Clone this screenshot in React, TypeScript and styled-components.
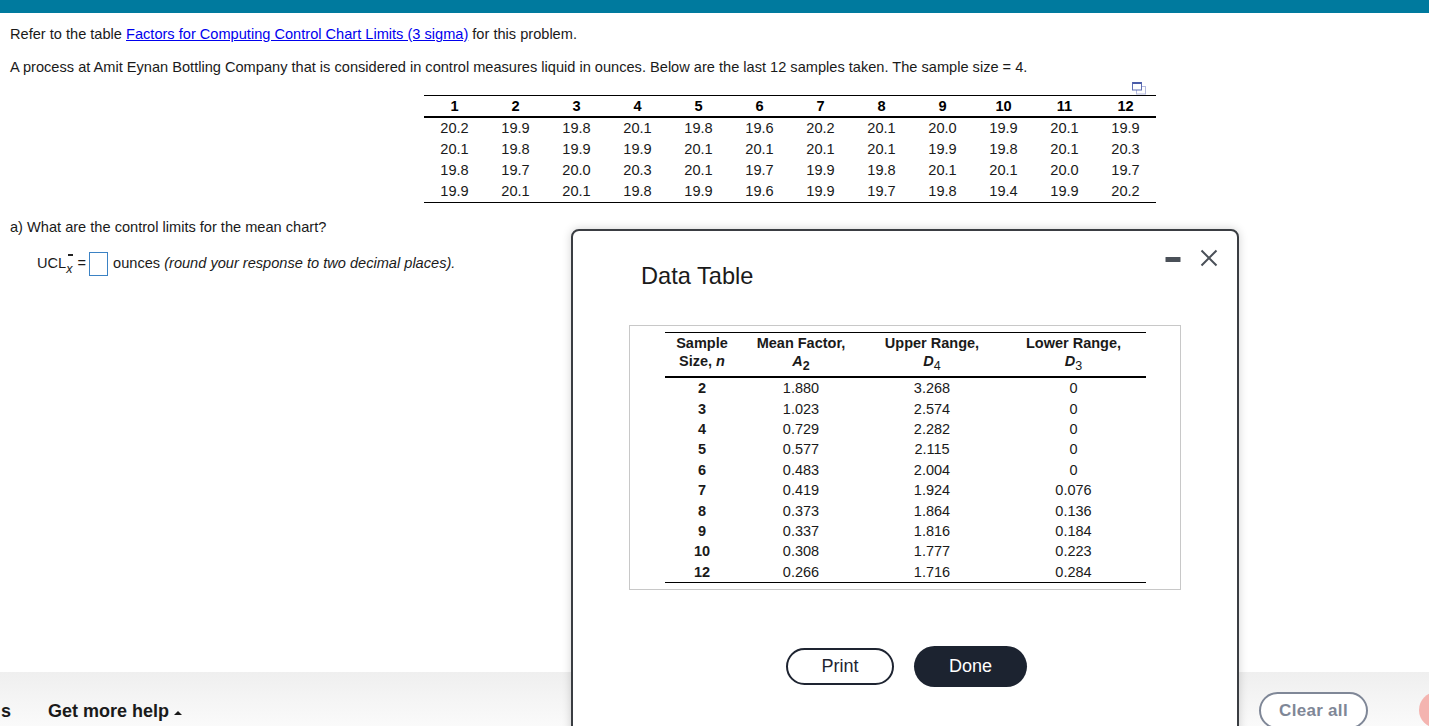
import React from "react";
import styled, { createGlobalStyle } from "styled-components";

const Global = createGlobalStyle`
  html, body { margin: 0; padding: 0; background: #fff; }
  body { font-family: "Liberation Sans", Arial, sans-serif; color: #1a1a1a; overflow: hidden; }
`;

const Page = styled.div`
  position: relative;
  width: 1429px;
  height: 726px;
  overflow: hidden;
  display: flex;
  flex-direction: column;
`;
const TopBar = styled.div`
  height: 13px;
  flex: none;
  background: #007a9e;
`;
const Content = styled.main`
  flex: 1;
  min-height: 0;
  padding: 13px 0 0 10px;
  font-size: 14.6px;
  line-height: 17px;
`;
const Para = styled.p`
  margin: 0 0 16px;
`;
const ProblemPara = styled(Para)`
  margin-bottom: 7px;
`;
const TableLink = styled.a`
  color: #0000ee;
  text-decoration: underline;
`;
const DataWrap = styled.div`
  width: 732px;
  margin: 0 0 0 414px;
`;
const IconRow = styled.div`
  height: 13px;
  display: flex;
  justify-content: flex-end;
  align-items: flex-end;
  padding-right: 10px;
  margin-top: -1px;
`;
const SampleTable = styled.table`
  width: 100%;
  border-collapse: collapse;
  table-layout: fixed;
  border-top: 1px solid #000;
  border-bottom: 1px solid #000;
  font-size: 14.6px;
  margin-top: 0;
`;
const SampleHead = styled.th`
  height: 20px;
  padding: 0;
  font-weight: bold;
  border-bottom: 2px solid #000;
  color: #000;
`;
const SampleCell = styled.td`
  height: 21px;
  padding: 0;
  text-align: center;
`;
const Question = styled.p`
  margin: 16px 0 0;
`;
const AnswerRow = styled.div`
  margin: 15px 0 0 27px;
  display: flex;
  align-items: center;
  height: 25px;
`;
const Ucl = styled.span`
  display: inline-block;
`;
const XSub = styled.sub`
  font-size: 12.5px;
  font-style: italic;
  line-height: 0;
  vertical-align: -5px;
  position: relative;
  margin-right: 1px;
  &::before {
    content: "";
    position: absolute;
    left: 2px;
    top: -8px;
    width: 5px;
    height: 1.5px;
    background: #222;
  }
`;
const AnswerBox = styled.span`
  display: inline-block;
  width: 17px;
  height: 22px;
  margin: 0 5px 0 3px;
  border: 1px solid #3b82c4;
`;
const Footer = styled.footer`
  flex: none;
  height: 54px;
  box-sizing: border-box;
  padding-top: 27px;
  background: linear-gradient(#efefef, #fafafa);
  display: flex;
  align-items: flex-start;
  position: relative;
`;
const CutWord = styled.span`
  font-size: 18px;
  font-weight: bold;
  line-height: 24px;
  width: 47px;
  margin-left: 1px;
  flex: none;
`;
const HelpLink = styled.span`
  font-size: 18px;
  font-weight: bold;
  color: #1a1a1a;
  line-height: 24px;
  display: flex;
  align-items: center;
  gap: 5px;
`;
const Caret = styled.span`
  width: 0;
  height: 0;
  margin-top: 3px;
  border-left: 4px solid transparent;
  border-right: 4px solid transparent;
  border-bottom: 4px solid #1a1a1a;
`;
const ClearAll = styled.button`
  position: absolute;
  left: 1259px;
  top: 20px;
  width: 109px;
  height: 37px;
  border: 2px solid #7f8797;
  border-radius: 19px;
  background: #fff;
  color: #7f8797;
  font: bold 17px "Liberation Sans", Arial, sans-serif;
  letter-spacing: 0.3px;
  padding: 0;
`;
const PinkDot = styled.span`
  position: absolute;
  left: 1419px;
  top: 20px;
  width: 36px;
  height: 36px;
  border-radius: 50%;
  background: #f4b4b0;
`;
const Modal = styled.section`
  position: absolute;
  left: 571px;
  top: 229px;
  width: 608px;
  height: 510px;
  background: #fff;
  border: 2px solid #3a3d42;
  border-radius: 8px;
  box-shadow: 0 0 10px rgba(0, 0, 0, 0.18);
  display: flex;
  flex-direction: column;
  padding: 0 0 0 56px;
  box-sizing: content-box;
`;
const ModalHead = styled.div`
  height: 94px;
  display: flex;
  justify-content: space-between;
  box-sizing: border-box;
`;
const ModalTitle = styled.h2`
  margin: 30px 0 0 12px;
  font-size: 23.6px;
  line-height: 30px;
  font-weight: normal;
  color: #1a1a1a;
`;
const WindowIcons = styled.div`
  display: flex;
  gap: 19px;
  margin: 15px 19px 0 0;
  align-items: flex-start;
`;
const FrameBox = styled.div`
  width: 552px;
  height: 265px;
  box-sizing: border-box;
  border: 1px solid #c8c8c8;
  padding: 6px 34px 0 35px;
`;
const FactorTable = styled.table`
  width: 100%;
  border-collapse: collapse;
  table-layout: fixed;
  font-size: 14.5px;
  color: #1a1a1a;
  border-top: 1px solid #000;
  border-bottom: 1px solid #000;
`;
const FactorHead = styled.th<{ $w: number }>`
  height: 42px;
  padding: 1px 0 0;
  font-weight: bold;
  line-height: 18px;
  border-bottom: 2px solid #000;
  vertical-align: top;
  width: ${(p) => p.$w}px;
`;
const SymbolLine = styled.span`
  font-style: italic;
`;
const Sub = styled.sub`
  font-size: 12.5px;
  font-style: normal;
  font-weight: bold;
  line-height: 0;
  vertical-align: -4px;
`;
const ThinSub = styled(Sub)`
  font-weight: normal;
`;
const FactorCell = styled.td<{ $bold?: boolean }>`
  height: 20.4px;
  padding: 0;
  text-align: center;
  font-weight: ${(p) => (p.$bold ? "bold" : "normal")};
`;
const ButtonRow = styled.div`
  width: 552px;
  display: flex;
  justify-content: center;
  align-items: center;
  gap: 20px;
  margin-top: 56px;
  padding-left: 3px;
  box-sizing: border-box;
`;
const PrintBtn = styled.button`
  width: 108px;
  height: 37px;
  background: #fff;
  color: #1e2431;
  border: 2px solid #1e2431;
  border-radius: 19px;
  font: 18px "Liberation Sans", Arial, sans-serif;
  padding: 0;
`;
const DoneBtn = styled.button`
  width: 113px;
  height: 41px;
  background: #1c2330;
  color: #fff;
  border: none;
  border-radius: 21px;
  font: 18px "Liberation Sans", Arial, sans-serif;
  padding: 0;
`;

const samples = [
  [1, "20.2", "20.1", "19.8", "19.9"],
  [2, "19.9", "19.8", "19.7", "20.1"],
  [3, "19.8", "19.9", "20.0", "20.1"],
  [4, "20.1", "19.9", "20.3", "19.8"],
  [5, "19.8", "20.1", "20.1", "19.9"],
  [6, "19.6", "20.1", "19.7", "19.6"],
  [7, "20.2", "20.1", "19.9", "19.9"],
  [8, "20.1", "20.1", "19.8", "19.7"],
  [9, "20.0", "19.9", "20.1", "19.8"],
  [10, "19.9", "19.8", "20.1", "19.4"],
  [11, "20.1", "20.1", "20.0", "19.9"],
  [12, "19.9", "20.3", "19.7", "20.2"],
];
const factors = [
  ["2", "1.880", "3.268", "0"],
  ["3", "1.023", "2.574", "0"],
  ["4", "0.729", "2.282", "0"],
  ["5", "0.577", "2.115", "0"],
  ["6", "0.483", "2.004", "0"],
  ["7", "0.419", "1.924", "0.076"],
  ["8", "0.373", "1.864", "0.136"],
  ["9", "0.337", "1.816", "0.184"],
  ["10", "0.308", "1.777", "0.223"],
  ["12", "0.266", "1.716", "0.284"],
];

const CopyIcon = () => (
  <svg width="14" height="13" viewBox="0 0 14 13">
    <rect x="4.5" y="4.5" width="9" height="7.5" fill="#fff" stroke="#b4bade" />
    <rect x="0.5" y="0.5" width="9" height="7.5" fill="#fff" stroke="#5f6fb3" />
    <line x1="0.5" y1="1" x2="9.5" y2="1" stroke="#4a5ca8" strokeWidth="2" />
  </svg>
);
const MinusIcon = () => (
  <svg width="16" height="24" viewBox="0 0 16 24">
    <rect x="0.5" y="11" width="15" height="5" rx="0.5" fill="#4a5058" />
  </svg>
);
const CloseIcon = () => (
  <svg width="18" height="24" viewBox="0 0 18 24">
    <path d="M1.5 4.5 L16.5 19.5 M16.5 4.5 L1.5 19.5" stroke="#4a5058" strokeWidth="2" fill="none" />
  </svg>
);

export default function App() {
  return (
    <Page>
      <Global />
      <TopBar />
      <Content>
        <Para>
          Refer to the table <TableLink href="#">Factors for Computing Control Chart Limits (3 sigma)</TableLink> for this problem.
        </Para>
        <ProblemPara>
          A process at Amit Eynan Bottling Company that is considered in control measures liquid in ounces. Below are the last 12 samples taken. The sample size = 4.
        </ProblemPara>
        <DataWrap>
          <IconRow>
            <CopyIcon />
          </IconRow>
          <SampleTable>
            <thead>
              <tr>
                {samples.map((c) => (
                  <SampleHead key={c[0]}>{c[0]}</SampleHead>
                ))}
              </tr>
            </thead>
            <tbody>
              {[1, 2, 3, 4].map((r) => (
                <tr key={r}>
                  {samples.map((c) => (
                    <SampleCell key={c[0]}>{c[r]}</SampleCell>
                  ))}
                </tr>
              ))}
            </tbody>
          </SampleTable>
        </DataWrap>
        <Question>a) What are the control limits for the mean chart?</Question>
        <AnswerRow>
          <Ucl>
            UCL<XSub>x</XSub>
          </Ucl>
          &nbsp;=
          <AnswerBox />
          ounces&nbsp;<em>(round your response to two decimal places).</em>
        </AnswerRow>
      </Content>
      <Footer>
        <CutWord>s</CutWord>
        <HelpLink>
          Get more help <Caret />
        </HelpLink>
        <ClearAll>Clear all</ClearAll>
        <PinkDot />
      </Footer>
      <Modal>
        <ModalHead>
          <ModalTitle>Data Table</ModalTitle>
          <WindowIcons>
            <MinusIcon />
            <CloseIcon />
          </WindowIcons>
        </ModalHead>
        <FrameBox>
          <FactorTable>
            <thead>
              <tr>
                <FactorHead $w={74}>
                  Sample
                  <br />
                  Size, <SymbolLine>n</SymbolLine>
                </FactorHead>
                <FactorHead $w={124}>
                  Mean Factor,
                  <br />
                  <SymbolLine>A</SymbolLine>
                  <Sub>2</Sub>
                </FactorHead>
                <FactorHead $w={138}>
                  Upper Range,
                  <br />
                  <SymbolLine>D</SymbolLine>
                  <ThinSub>4</ThinSub>
                </FactorHead>
                <FactorHead $w={145}>
                  Lower Range,
                  <br />
                  <SymbolLine>D</SymbolLine>
                  <ThinSub>3</ThinSub>
                </FactorHead>
              </tr>
            </thead>
            <tbody>
              {factors.map((f) => (
                <tr key={f[0]}>
                  <FactorCell $bold>{f[0]}</FactorCell>
                  <FactorCell>{f[1]}</FactorCell>
                  <FactorCell>{f[2]}</FactorCell>
                  <FactorCell>{f[3]}</FactorCell>
                </tr>
              ))}
            </tbody>
          </FactorTable>
        </FrameBox>
        <ButtonRow>
          <PrintBtn>Print</PrintBtn>
          <DoneBtn>Done</DoneBtn>
        </ButtonRow>
      </Modal>
    </Page>
  );
}
